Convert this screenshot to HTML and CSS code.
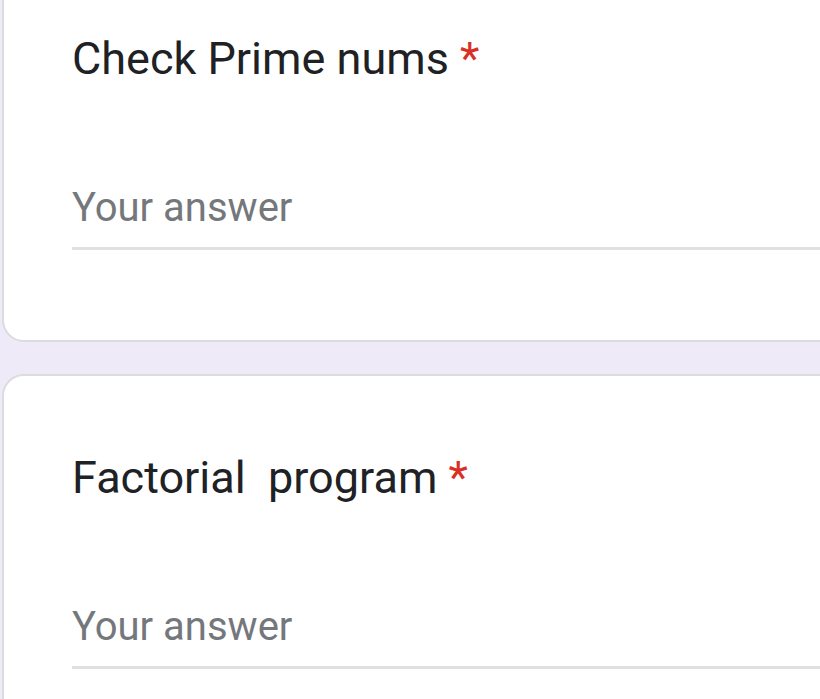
FILE: index.html
```html
<!DOCTYPE html>
<html lang="en">
<head>
<meta charset="utf-8">
<title>Form</title>
<link rel="stylesheet" href="styles.css">
</head>
<body>
<div class="form">
  <div class="card">
    <div class="title">Check Prime nums<span class="req">*</span></div>
    <div class="answer">Your answer</div>
  </div>
  <div class="card">
    <div class="title">Factorial&nbsp; program<span class="req">*</span></div>
    <div class="answer">Your answer</div>
  </div>
</div>
</body>
</html>
```
FILE: styles.css
```css
html, body {
  margin: 0;
  padding: 0;
}
body {
  background: #eeeaf8;
  overflow: hidden;
  font-family: Roboto, "Liberation Sans", Arial, sans-serif;
}
.form {
  display: flex;
  flex-direction: column;
  gap: 32px;
  margin-top: -45px;
  padding-left: 2px;
  width: 940px;
}
.card {
  background: #ffffff;
  border: 2px solid #dadce0;
  border-radius: 22px;
  padding: 74px 0 90px 68px;
}
.title {
  font-size: 45px;
  line-height: 56px;
  color: #202124;
}
.req {
  color: #d93025;
  padding-left: 11px;
}
.answer {
  margin-top: 97px;
  font-size: 40px;
  line-height: 48px;
  color: #74777b;
  padding-bottom: 15px;
  border-bottom: 3px solid #e0e0e0;
}
```
